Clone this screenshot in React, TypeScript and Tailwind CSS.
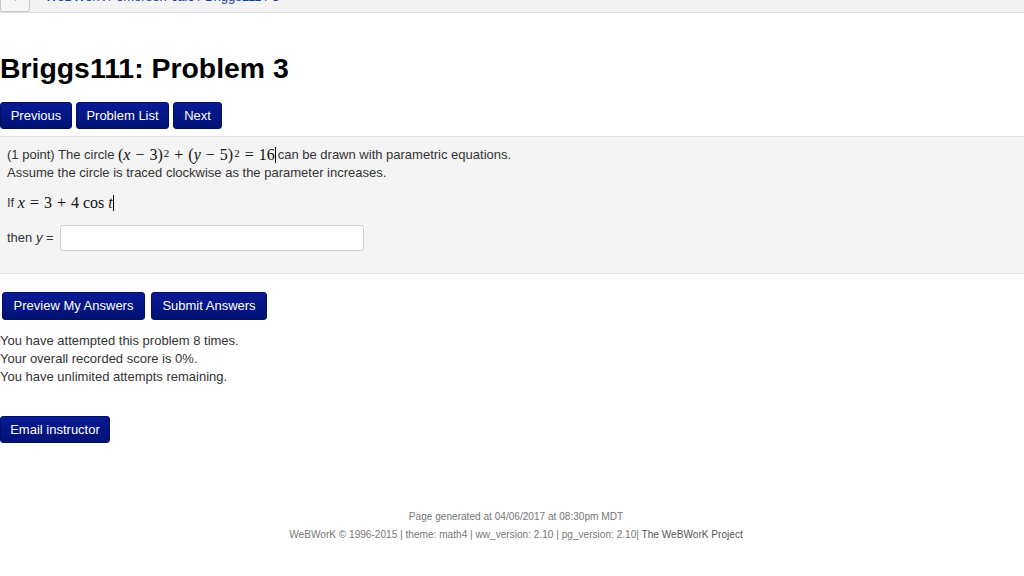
import React from 'react';

const sans = { fontFamily: '"Liberation Sans", Arial, sans-serif' };
const serif = { fontFamily: '"Liberation Serif", "DejaVu Serif", serif' };

const NavButton: React.FC<{ label: string; className?: string }> = ({ label, className = '' }) => (
  <button
    className={`bg-gradient-to-b from-[#0a1a96] to-[#001273] text-white border border-[#00105c] rounded-[3px] ${className}`}
  >
    {label}
  </button>
);

// small inline math helpers, roughly like MathJax output
const V: React.FC<{ children: React.ReactNode }> = ({ children }) => <i className="italic">{children}</i>;
const Op: React.FC<{ children: React.ReactNode }> = ({ children }) => <span className="mx-[5px]">{children}</span>;
const Sup: React.FC<{ children: React.ReactNode }> = ({ children }) => (
  <sup className="text-[11px] relative -top-[3px] ml-[1px]">{children}</sup>
);

export default function App() {
  return (
    <div className="w-[1024px] h-[576px] bg-white overflow-hidden text-[#333]" style={sans}>
      {/* Top bar, mostly scrolled out of view */}
      <div className="h-[13px] bg-[#f3f3f3] border-b border-[#dedede] flex items-start overflow-hidden">
        <div className="w-[30px] h-[12px] border border-t-0 border-[#c8c8c8] rounded-b-[3px] bg-[#f6f6f6] flex justify-center items-start overflow-hidden">
          <span className="text-[10px] leading-[10px] text-[#444] -mt-[7px]">▾</span>
        </div>
        <div className="ml-[15px] text-[13px] leading-[13px] text-[#1a3c9c] -mt-[10px] whitespace-nowrap">
          WeBWorK / emerson-calc / Briggs111 / 3
        </div>
      </div>

      <h1 className="mt-[37px] text-[28.4px] font-bold text-black leading-[36px]">Briggs111: Problem 3</h1>

      <div className="mt-[16px] flex gap-1 text-[13px]">
        <NavButton label="Previous" className="w-[72px] h-[27px]" />
        <NavButton label="Problem List" className="w-[93px] h-[27px]" />
        <NavButton label="Next" className="w-[49px] h-[27px]" />
      </div>

      {/* Problem body */}
      <div className="mt-[7px] bg-[#f4f4f4] border-y border-[#e3e3e3] px-[7px] pt-[9px] pb-[22px] text-[13px] leading-[18px]">
        <div className="flex items-center whitespace-nowrap">
          <span>(1 point) The circle&nbsp;</span>
          <span className="text-[16px] text-[#111]" style={serif}>
            (<V>x</V><Op>−</Op>3)<Sup>2</Sup><Op>+</Op>(<V>y</V><Op>−</Op>5)<Sup>2</Sup><Op>=</Op>16
          </span>
          <span className="inline-block w-px h-[16px] bg-black mr-[2px]" />
          <span>can be drawn with parametric equations.</span>
        </div>
        <div>Assume the circle is traced clockwise as the parameter increases.</div>
        <div className="mt-[12px] flex items-center">
          <span>If&nbsp;</span>
          <span className="text-[16px] text-[#111]" style={serif}>
            <V>x</V><Op>=</Op>3<Op>+</Op>4 cos <V>t</V>
          </span>
          <span className="inline-block w-px h-[16px] bg-black" />
        </div>
        <div className="mt-[13px] flex items-center">
          <span>
            then <V>y</V> =
          </span>
          <input
            type="text"
            className="ml-[6px] w-[304px] h-[26px] bg-white border border-[#ccc] rounded-[3px]"
          />
        </div>
      </div>

      <div className="mt-[18px] ml-[2px] flex gap-[6px] text-[13px]">
        <NavButton label="Preview My Answers" className="w-[143px] h-[28px]" />
        <NavButton label="Submit Answers" className="w-[116px] h-[28px]" />
      </div>

      <div className="mt-[12px] text-[13px] leading-[18px]">
        <div>You have attempted this problem 8 times.</div>
        <div>Your overall recorded score is 0%.</div>
        <div>You have unlimited attempts remaining.</div>
      </div>

      <NavButton label="Email instructor" className="mt-[30px] w-[110px] h-[27px] text-[13px]" />

      <div className="mt-[65px] pl-[8px] text-center text-[10.1px] leading-[18px] text-[#777]">
        <div>Page generated at 04/06/2017 at 08:30pm MDT</div>
        <div>
          WeBWorK © 1996-2015 | theme: math4 | ww_version: 2.10 | pg_version: 2.10|{' '}
          <span className="text-[#555]">The WeBWorK Project</span>
        </div>
      </div>
    </div>
  );
}
